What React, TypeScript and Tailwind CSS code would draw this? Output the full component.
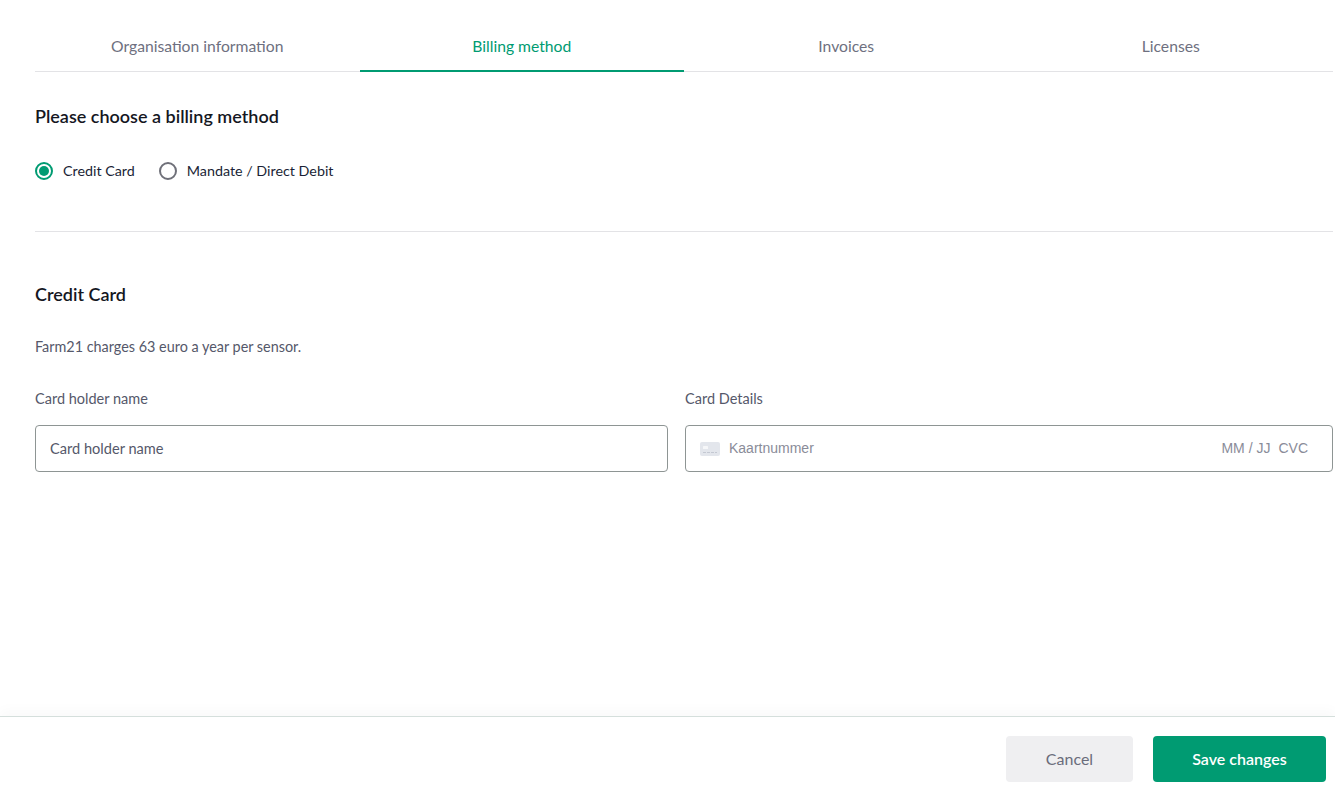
import { useState } from "react"

const tabs = ["Organisation information", "Billing method", "Invoices", "Licenses"]

const CardIcon = () => (
    <svg width="20" height="14" viewBox="0 0 20 14" className="shrink-0">
        <rect x="0" y="0" width="20" height="14" rx="2" fill="#e3e6ec" />
        <rect x="3" y="4" width="5" height="3" rx="0.5" fill="#f6f7f9" />
        <rect x="3" y="10" width="3" height="1" fill="#c4c8d2" />
        <rect x="7" y="10" width="3" height="1" fill="#c4c8d2" />
        <rect x="11" y="10" width="3" height="1" fill="#c4c8d2" />
        <rect x="15" y="10" width="2" height="1" fill="#c4c8d2" />
    </svg>
)

const Radio = ({ checked, label, onClick }: { checked: boolean, label: string, onClick: () => void }) => (
    <button onClick={onClick} className="flex items-center gap-[10px] cursor-pointer">
        <span className={`w-[18px] h-[18px] rounded-full border-2 flex items-center justify-center ${checked ? "border-[#009b72]" : "border-[#6f7079]"}`}>
            {checked && <span className="w-[10px] h-[10px] rounded-full bg-[#009b72]" />}
        </span>
        <span className="text-[14.3px] text-[#1a1f36]">{label}</span>
    </button>
)

export default function App() {
    const [active, setActive] = useState(1)
    const [method, setMethod] = useState("card")

    return (
        <div className="h-[791px] flex flex-col bg-white font-['Lato',sans-serif] overflow-hidden">
            <div className="pl-[35px] pr-[2px] flex-1">
                <div className="pt-[22px] grid grid-cols-4 border-b border-[#e3e3e6]">
                    {tabs.map((t, i) => (
                        <button
                            key={t}
                            onClick={() => setActive(i)}
                            className={`h-[50px] pt-[2px] text-[15.7px] border-b-2 -mb-px ${i === active ? "border-[#009b72] text-[#009b72]" : "border-transparent text-[#6e7080]"}`}
                        >
                            {t}
                        </button>
                    ))}
                </div>

                <h2 className="mt-[32px] text-[18px] leading-6 font-semibold text-[#15171f]">Please choose a billing method</h2>

                <div className="mt-[33px] flex gap-6 h-5 items-center">
                    <Radio checked={method === "card"} label="Credit Card" onClick={() => setMethod("card")} />
                    <Radio checked={method === "debit"} label="Mandate / Direct Debit" onClick={() => setMethod("debit")} />
                </div>

                <div className="mt-[50px] border-t border-[#e3e3e6]" />

                <h2 className="mt-[50px] text-[18px] leading-6 font-semibold text-[#15171f]">Credit Card</h2>

                <p className="mt-[31px] text-[14.4px] leading-5 text-[#55586a]">Farm21 charges 63 euro a year per sensor.</p>

                <div className="mt-[32px] grid grid-cols-[633px_1fr] gap-[17px]">
                    <div>
                        <label className="block text-[14.5px] leading-5 text-[#55586a]">Card holder name</label>
                        <input
                            placeholder="Card holder name"
                            className="mt-[16px] w-full h-[47px] px-[14px] rounded-[4px] border border-[#8e9594] text-[14.6px] text-[#1a1f36] placeholder:text-[#55586a] outline-none"
                        />
                    </div>
                    <div>
                        <label className="block text-[14.5px] leading-5 text-[#55586a]">Card Details</label>
                        <div className="mt-[16px] h-[47px] px-[14px] rounded-[4px] border border-[#8e9594] flex items-center gap-[9px] font-['Liberation_Sans',Arial,sans-serif] text-[14px] text-[#8a8c99]">
                            <CardIcon />
                            <span className="flex-1">Kaartnummer</span>
                            <span>MM / JJ</span>
                            <span className="-ml-[1px] mr-[10px]">CVC</span>
                        </div>
                    </div>
                </div>
            </div>

            <div className="h-[75px] shrink-0 border-t border-[#d5dfdc] shadow-[0_-6px_12px_rgba(0,0,0,0.025)] flex items-start justify-end gap-[20px] pr-[9px] pt-[19px]">
                <button className="w-[127px] h-[46px] rounded-[4px] bg-[#efeff1] text-[16px] text-[#6a6c7b]">Cancel</button>
                <button className="w-[173px] h-[46px] rounded-[4px] bg-[#009b72] text-[16px] font-semibold text-white">Save changes</button>
            </div>
        </div>
    )
}
